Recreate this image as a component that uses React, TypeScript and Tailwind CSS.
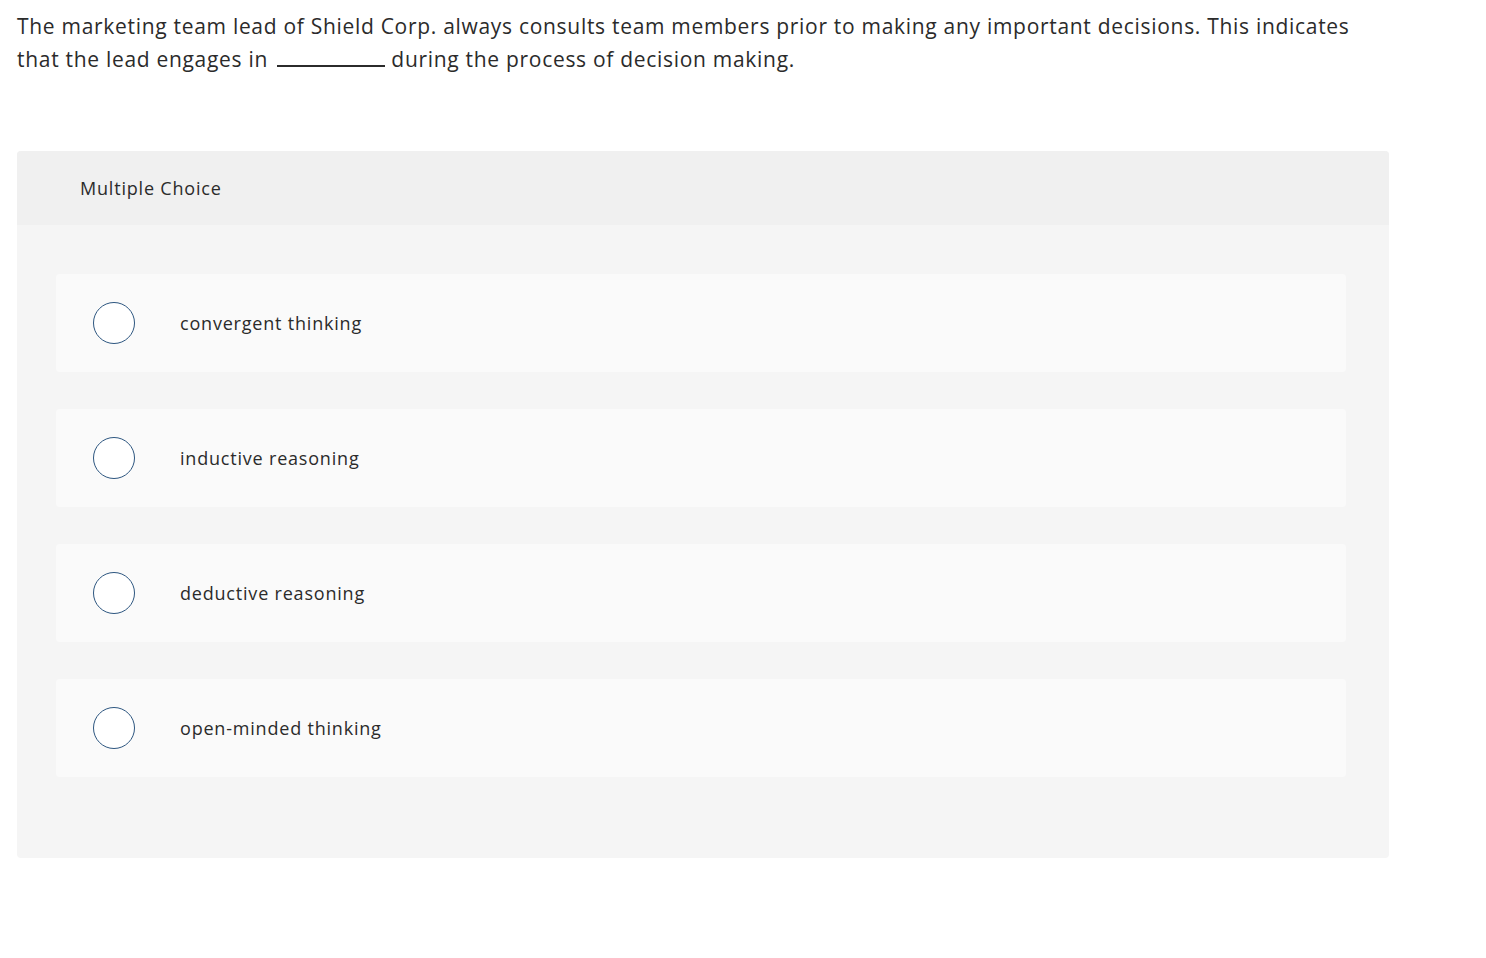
const options = [
  "convergent thinking",
  "inductive reasoning",
  "deductive reasoning",
  "open-minded thinking",
];

export default function App() {
  return (
    <div className="min-h-screen bg-white px-[17px] pt-[10px] text-[#2b2b2b] font-['Open_Sans','Liberation_Sans',sans-serif]">
      <p className="whitespace-nowrap text-[21px] leading-[33px] tracking-[0.7px]">
        The marketing team lead of Shield Corp. always consults team members prior to making any important decisions. This indicates
        <br />
        that the lead engages in{" "}
        <span className="ml-[3px] inline-block w-[108px] border-b-2 border-[#2b2b2b] align-baseline" />{" "}
        during the process of decision making.
      </p>

      <div className="mt-[75px] w-[1372px] overflow-hidden rounded-[4px] bg-[#f5f5f5]">
        <div className="flex h-[74px] items-center bg-[#f0f0f0] pl-[63px] text-[18px] tracking-[0.8px]">
          Multiple Choice
        </div>
        <div className="flex flex-col gap-[37px] pb-[81px] pl-[39px] pr-[43px] pt-[49px]">
          {options.map((o) => (
            <label
              key={o}
              className="flex h-[98px] cursor-pointer items-center rounded-[4px] bg-[#fafafa] pl-[37px]"
            >
              <span className="size-[42px] shrink-0 rounded-full border-[1.5px] border-[#2d5680] bg-white" />
              <span className="ml-[45px] text-[18px] tracking-[0.8px]">{o}</span>
            </label>
          ))}
        </div>
      </div>
    </div>
  );
}
